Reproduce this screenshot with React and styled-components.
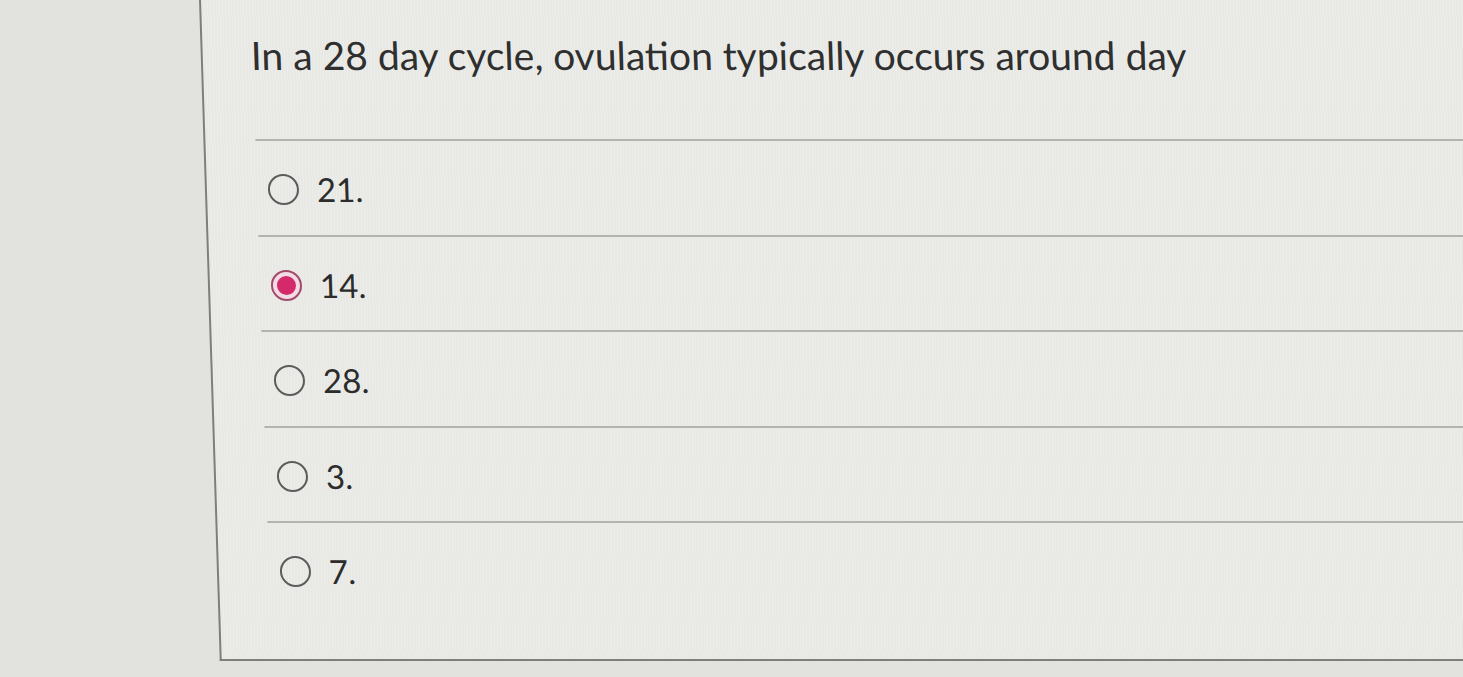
import React from "react";
import styled, { createGlobalStyle } from "styled-components";

const Global = createGlobalStyle`
  html, body { margin: 0; padding: 0; }
  body {
    background: #e3e4e0;
    font-family: Lato, "Open Sans", "Liberation Sans", sans-serif;
    overflow: hidden;
  }
`;

const Page = styled.div`
  width: 1463px;
  height: 677px;
  overflow: hidden;
  background: #e2e3df;
`;

const Panel = styled.section`
  box-sizing: border-box;
  margin-left: 199px;
  width: 1300px;
  height: 661px;
  padding: 30px 0 0 50px;
  background-color: #e8e9e5;
  background-image: repeating-linear-gradient(
    90deg,
    rgba(255, 255, 255, 0.18) 0 1px,
    rgba(0, 0, 0, 0) 1px 3px
  );
  border-left: 2px solid #7d7f7c;
  border-bottom: 2px solid #7d7f7c;
  transform: skewX(1.8deg);
  transform-origin: top left;
`;

const Question = styled.h1`
  margin: 0 0 0 -2px;
  height: 109px;
  font-size: 39px;
  font-weight: 400;
  line-height: 50px;
  color: #2e2f2e;
  letter-spacing: 0;
`;

const Options = styled.ul`
  list-style: none;
  margin: 0;
  padding: 0;
`;

const Option = styled.li`
  display: flex;
  align-items: center;
  gap: 18px;
  height: 95.5px;
  padding: 4px 0 0 11px;
  border-top: 2px solid #b3b4b1;
  box-sizing: border-box;
`;

const Radio = styled.span`
  box-sizing: border-box;
  flex: none;
  width: 31px;
  height: 31px;
  border-radius: 50%;
  border: 2px solid ${(p) => (p.$checked ? "#a24a6c" : "#5b5c5b")};
  background: ${(p) => (p.$checked ? "#f3dbe4" : "transparent")};
  display: flex;
  align-items: center;
  justify-content: center;

  &::after {
    content: "";
    display: ${(p) => (p.$checked ? "block" : "none")};
    width: 19px;
    height: 19px;
    border-radius: 50%;
    background: #d42a6b;
  }
`;

const Label = styled.span`
  font-size: 33px;
  color: #2b2c2b;
  line-height: 1;
`;

const options = [
  { label: "21.", checked: false },
  { label: "14.", checked: true },
  { label: "28.", checked: false },
  { label: "3.", checked: false },
  { label: "7.", checked: false },
];

export default function App() {
  return (
    <Page>
      <Global />
      <Panel>
        <Question>In a 28 day cycle, ovulation typically occurs around day</Question>
        <Options>
          {options.map((o) => (
            <Option key={o.label}>
              <Radio $checked={o.checked} />
              <Label>{o.label}</Label>
            </Option>
          ))}
        </Options>
      </Panel>
    </Page>
  );
}
